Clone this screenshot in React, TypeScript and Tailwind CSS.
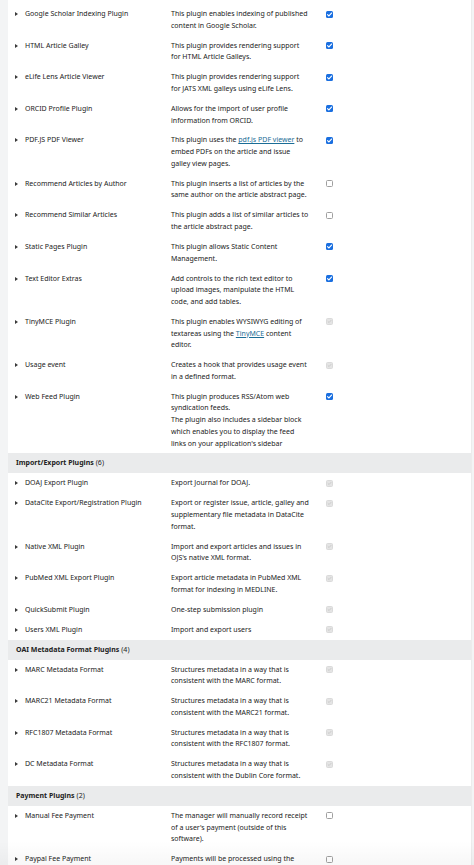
import React from 'react';

type Box = 'on' | 'off' | 'locked';

interface Plugin {
  name: string;
  lines: React.ReactNode[];
  box: Box;
}

interface Category {
  title?: string;
  count?: number;
  plugins: Plugin[];
}

const Link = ({ children }: { children: React.ReactNode }) => (
  <a href="#" className="text-[#1b6d96] underline">
    {children}
  </a>
);

const metadata = (fmt: string) => ['Structures metadata in a way that is', `consistent with the ${fmt} format.`];

const categories: Category[] = [
  {
    plugins: [
      { name: 'Google Scholar Indexing Plugin', lines: ['This plugin enables indexing of published', 'content in Google Scholar.'], box: 'on' },
      { name: 'HTML Article Galley', lines: ['This plugin provides rendering support', 'for HTML Article Galleys.'], box: 'on' },
      { name: 'eLife Lens Article Viewer', lines: ['This plugin provides rendering support', 'for JATS XML galleys using eLife Lens.'], box: 'on' },
      { name: 'ORCID Profile Plugin', lines: ['Allows for the import of user profile', 'information from ORCID.'], box: 'on' },
      {
        name: 'PDF.JS PDF Viewer',
        lines: [
          <>This plugin uses the <Link>pdf.js PDF viewer</Link> to</>,
          'embed PDFs on the article and issue',
          'galley view pages.',
        ],
        box: 'on',
      },
      { name: 'Recommend Articles by Author', lines: ['This plugin inserts a list of articles by the', 'same author on the article abstract page.'], box: 'off' },
      { name: 'Recommend Similar Articles', lines: ['This plugin adds a list of similar articles to', 'the article abstract page.'], box: 'off' },
      { name: 'Static Pages Plugin', lines: ['This plugin allows Static Content', 'Management.'], box: 'on' },
      { name: 'Text Editor Extras', lines: ['Add controls to the rich text editor to', 'upload images, manipulate the HTML', 'code, and add tables.'], box: 'on' },
      {
        name: 'TinyMCE Plugin',
        lines: ['This plugin enables WYSIWYG editing of', <>textareas using the <Link>TinyMCE</Link> content</>, 'editor.'],
        box: 'locked',
      },
      { name: 'Usage event', lines: ['Creates a hook that provides usage event', 'in a defined format.'], box: 'locked' },
      {
        name: 'Web Feed Plugin',
        lines: [
          'This plugin produces RSS/Atom web',
          'syndication feeds.',
          'The plugin also includes a sidebar block',
          'which enables you to display the feed',
          "links on your application's sidebar",
        ],
        box: 'on',
      },
    ],
  },
  {
    title: 'Import/Export Plugins',
    count: 6,
    plugins: [
      { name: 'DOAJ Export Plugin', lines: ['Export Journal for DOAJ.'], box: 'locked' },
      { name: 'DataCite Export/Registration Plugin', lines: ['Export or register issue, article, galley and', 'supplementary file metadata in DataCite', 'format.'], box: 'locked' },
      { name: 'Native XML Plugin', lines: ['Import and export articles and issues in', "OJS's native XML format."], box: 'locked' },
      { name: 'PubMed XML Export Plugin', lines: ['Export article metadata in PubMed XML', 'format for indexing in MEDLINE.'], box: 'locked' },
      { name: 'QuickSubmit Plugin', lines: ['One-step submission plugin'], box: 'locked' },
      { name: 'Users XML Plugin', lines: ['Import and export users'], box: 'locked' },
    ],
  },
  {
    title: 'OAI Metadata Format Plugins',
    count: 4,
    plugins: [
      { name: 'MARC Metadata Format', lines: metadata('MARC'), box: 'locked' },
      { name: 'MARC21 Metadata Format', lines: metadata('MARC21'), box: 'locked' },
      { name: 'RFC1807 Metadata Format', lines: metadata('RFC1807'), box: 'locked' },
      { name: 'DC Metadata Format', lines: metadata('Dublin Core'), box: 'locked' },
    ],
  },
  {
    title: 'Payment Plugins',
    count: 2,
    plugins: [
      { name: 'Manual Fee Payment', lines: ['The manager will manually record receipt', "of a user's payment (outside of this", 'software).'], box: 'off' },
      { name: 'Paypal Fee Payment', lines: ['Payments will be processed using the'], box: 'off' },
    ],
  },
];

const Check = ({ color }: { color: string }) => (
  <svg viewBox="0 0 10 10" className="w-full h-full">
    <path d="M2.2 5.2 L4.2 7.1 L7.9 2.9" fill="none" stroke={color} strokeWidth="1.6" strokeLinecap="round" strokeLinejoin="round" />
  </svg>
);

const CheckBox = ({ state }: { state: Box }) => {
  if (state === 'on') {
    return (
      <span className="block w-[7px] h-[7px] rounded-[1.5px] bg-[#1a6fe0]">
        <Check color="#ffffff" />
      </span>
    );
  }
  if (state === 'locked') {
    return (
      <span className="block w-[7px] h-[7px] rounded-[1.5px] bg-[#e4e4e4] border border-[#dadada]">
        <Check color="#c4c4c4" />
      </span>
    );
  }
  return <span className="block w-[7px] h-[7px] rounded-[1.5px] bg-white border border-[#a0a0a0]" />;
};

const Row = ({ plugin }: { plugin: Plugin }) => (
  <div className="flex py-[4.1px]">
    <div className="w-[17px] flex justify-end pr-[7px] pt-[4px]">
      <span className="block w-0 h-0 border-y-[2px] border-y-transparent border-l-[3px] border-l-[#3a3a3a]" />
    </div>
    <div className="w-[146px] text-[#222]">{plugin.name}</div>
    <div className="w-[155px] text-[#222] whitespace-nowrap">
      {plugin.lines.map((l, i) => (
        <div key={i}>{l}</div>
      ))}
    </div>
    <div className="pt-[2.5px]">
      <CheckBox state={plugin.box} />
    </div>
  </div>
);

export default function App() {
  return (
    <div className="relative h-[865px] overflow-hidden bg-[#f3f4f5] font-['Noto_Sans',sans-serif] text-[7px] leading-[11.7px]">
      <div className="ml-[8px] mr-[2px] h-full bg-white border-r border-[#ececec] pt-[4px]">
        {categories.map((cat, ci) => (
          <div key={ci}>
            {cat.title && (
              <div className="h-[20px] flex items-center pl-[8px] bg-[#eaebec] text-[#222]">
                <span className="font-bold">{cat.title}</span>
                <span className="ml-[2px]">({cat.count})</span>
              </div>
            )}
            {cat.plugins.map((p) => (
              <Row key={p.name} plugin={p} />
            ))}
          </div>
        ))}
      </div>
      <div className="absolute left-0 right-0 bottom-0 h-[24px] bg-gradient-to-b from-transparent to-[#00000008] pointer-events-none" />
    </div>
  );
}
